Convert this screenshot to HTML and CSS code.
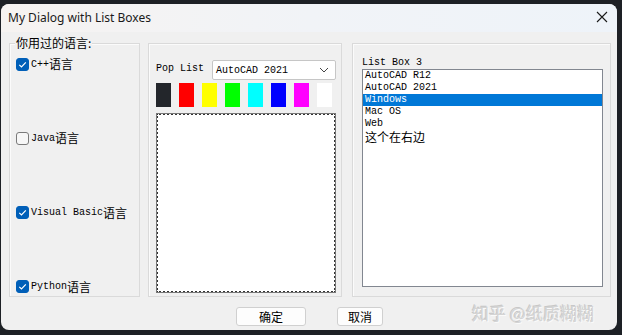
FILE: index.html
```html
<!DOCTYPE html>
<html>
<head>
<meta charset="utf-8">
<link rel="stylesheet" href="styles.css">
</head>
<body>
<div class="window">
  <div class="titlebar">
    <span class="title">My Dialog with List Boxes</span>
    <svg class="close" width="12" height="12" viewBox="0 0 12 12"><path d="M1 1 L11 11 M11 1 L1 11" stroke="#1a1a1a" stroke-width="1.1" fill="none"/></svg>
  </div>
  <div class="content">
    <div class="groups">
      <div class="group g1">
        <span class="legend">你用过的语言:</span>
        <div class="checks">
          <div class="check"><span class="box on"><svg width="13" height="13" viewBox="0 0 13 13"><path d="M3.3 6.8 L5.5 9 L9.8 4.4" stroke="#fff" stroke-width="1.2" fill="none"/></svg></span><span class="mono">C++</span><span class="cjk">语言</span></div>
          <div class="check"><span class="box"></span><span class="mono">Java</span><span class="cjk">语言</span></div>
          <div class="check"><span class="box on"><svg width="13" height="13" viewBox="0 0 13 13"><path d="M3.3 6.8 L5.5 9 L9.8 4.4" stroke="#fff" stroke-width="1.2" fill="none"/></svg></span><span class="mono">Visual Basic</span><span class="cjk">语言</span></div>
          <div class="check"><span class="box on"><svg width="13" height="13" viewBox="0 0 13 13"><path d="M3.3 6.8 L5.5 9 L9.8 4.4" stroke="#fff" stroke-width="1.2" fill="none"/></svg></span><span class="mono">Python</span><span class="cjk">语言</span></div>
        </div>
      </div>
      <div class="group g2">
        <div class="poprow">
          <span class="mono poplabel">Pop List</span>
          <div class="select"><span class="mono">AutoCAD 2021</span><svg width="10" height="6" viewBox="0 0 10 6"><path d="M1 1 L5 5 L9 1" stroke="#444" stroke-width="1" fill="none"/></svg></div>
        </div>
        <div class="swatches">
          <span class="sw sw-black"></span>
          <span class="sw sw-red"></span>
          <span class="sw sw-yellow"></span>
          <span class="sw sw-green"></span>
          <span class="sw sw-cyan"></span>
          <span class="sw sw-blue"></span>
          <span class="sw sw-magenta"></span>
          <span class="sw sw-white"></span>
        </div>
        <div class="canvas"></div>
      </div>
      <div class="group g3">
        <span class="mono lblabel">List Box 3</span>
        <div class="listbox">
          <div class="item mono">AutoCAD R12</div>
          <div class="item mono">AutoCAD 2021</div>
          <div class="item mono sel">Windows</div>
          <div class="item mono">Mac OS</div>
          <div class="item mono">Web</div>
          <div class="item cjkitem">这个在右边</div>
        </div>
      </div>
    </div>
    <div class="buttons">
      <button class="btn ok">确定</button>
      <button class="btn cancel">取消</button>
    </div>
    <div class="watermark">知乎 @纸质糊糊</div>
  </div>
</div>
</body>
</html>
```
FILE: styles.css
```css
* { box-sizing: border-box; }
html, body { margin: 0; padding: 0; }
body {
  background: #1d2025;
  width: 622px;
  height: 335px;
  overflow: hidden;
  padding: 4px 0 0 1px;
}
.window {
  width: 616px;
  height: 326px;
  background: #f0f0f0;
  border-radius: 8px;
  overflow: hidden;
  position: relative;
  display: flex;
  flex-direction: column;
}
.titlebar {
  height: 28px;
  flex: none;
  background: linear-gradient(90deg, #f6f3f1 0%, #f1f3f7 50%, #eef3f9 100%);
  display: flex;
  align-items: center;
  justify-content: space-between;
  padding: 0 8px 0 7px;
}
.title {
  font-family: "Noto Sans", "Open Sans", sans-serif;
  font-size: 12px;
  color: #1a1a1a;
  margin-top: -2px;
}
.close { margin-right: 1px; margin-top: -2px; }
.content {
  flex: 1;
  padding: 11px 0 0 8px;
  display: flex;
  flex-direction: column;
}
.groups {
  display: flex;
  gap: 8px;
  height: 254px;
}
.group {
  border: 1px solid #dadada;
  box-shadow: inset 1px 1px 0 #fbfbfb;
  height: 254px;
}
.mono {
  font-family: "Liberation Mono", "DejaVu Sans Mono", monospace;
  font-size: 10px;
  color: #000;
}
.cjk {
  font-family: "Noto Sans CJK SC", sans-serif;
  font-size: 12px;
  color: #000;
}
.g1 {
  width: 131px;
  display: flex;
  flex-direction: column;
  padding: 0 0 2px 6px;
}
.legend {
  align-self: flex-start;
  margin: -9px 0 0 -1px;
  padding: 0 1px;
  background: #f0f0f0;
  font-family: "Noto Sans CJK SC", sans-serif;
  font-size: 12px;
  line-height: 16px;
  color: #000;
}
.checks {
  flex: 1;
  display: flex;
  flex-direction: column;
  justify-content: space-between;
  padding-top: 6px;
}
.check {
  display: flex;
  align-items: center;
  height: 14px;
}
.check .cjk { line-height: 14px; }
.box {
  width: 13px;
  height: 13px;
  border-radius: 3px;
  border: 1px solid #7a7a7a;
  background: #f7f7f7;
  margin-right: 2px;
  flex: none;
  display: flex;
}
.box.on {
  background: #005fb8;
  border-color: #005fb8;
}
.box.on svg { margin: -1px; }
.g2 {
  width: 194px;
  padding: 16px 0 0 7px;
  display: flex;
  flex-direction: column;
}
.poprow {
  display: flex;
  align-items: center;
  height: 20px;
}
.poplabel { width: 56px; margin-top: -4px; }
.select {
  width: 124px;
  height: 20px;
  background: #fff;
  border: 1px solid #c6c6c6;
  border-radius: 2px;
  display: flex;
  align-items: center;
  justify-content: space-between;
  padding: 0 6px 0 3px;
}
.select .mono { margin-top: 1px; }
.swatches {
  display: flex;
  gap: 8px;
  margin-top: 3px;
  height: 24px;
}
.sw { width: 15px; height: 24px; display: block; }
.sw-black { background: #23262b; }
.sw-red { background: #ff0000; }
.sw-yellow { background: #ffff00; }
.sw-green { background: #00ff00; }
.sw-cyan { background: #00ffff; }
.sw-blue { background: #0000ff; }
.sw-magenta { background: #ff00ff; }
.sw-white { background: #ffffff; }
.canvas {
  margin-top: 6px;
  width: 180px;
  height: 180px;
  background: #fff;
  border: 2px dotted #333;
  outline: 1px solid #777;
  outline-offset: -1px;
}
.g3 {
  width: 259px;
  margin-left: 2px;
  padding: 13px 0 0 9px;
  display: flex;
  flex-direction: column;
}
.lblabel { line-height: 12px; height: 12px; }
.listbox {
  width: 241px;
  height: 218px;
  background: #fff;
  border: 1px solid #828790;
  margin-top: 0;
}
.item {
  line-height: 12px;
  height: 12px;
  padding-left: 2px;
  white-space: nowrap;
}
.item.sel { background: #0078d7; color: #fff; }
.cjkitem {
  font-family: "Noto Sans CJK SC", sans-serif;
  font-size: 12px;
  line-height: 14px;
  height: 14px;
  color: #000;
}
.buttons {
  display: flex;
  gap: 31px;
  margin-top: 10px;
  padding-left: 227px;
}
.btn {
  height: 19px;
  background: #fdfdfd;
  border: 1px solid #d0d0d0;
  border-radius: 3px;
  font-family: "Noto Sans CJK SC", sans-serif;
  font-size: 12px;
  color: #000;
  padding: 0;
  line-height: 17px;
}
.ok { width: 70px; }
.cancel { width: 46px; }
.watermark {
  position: absolute;
  left: 471px;
  top: 296px;
  font-family: "Noto Sans CJK SC", sans-serif;
  font-size: 17px;
  color: #d4d4d4;
  text-shadow: 1px 1px 0 #fafafa, -1px -1px 0 #c8c8c8;
  letter-spacing: 0px;
}
```
